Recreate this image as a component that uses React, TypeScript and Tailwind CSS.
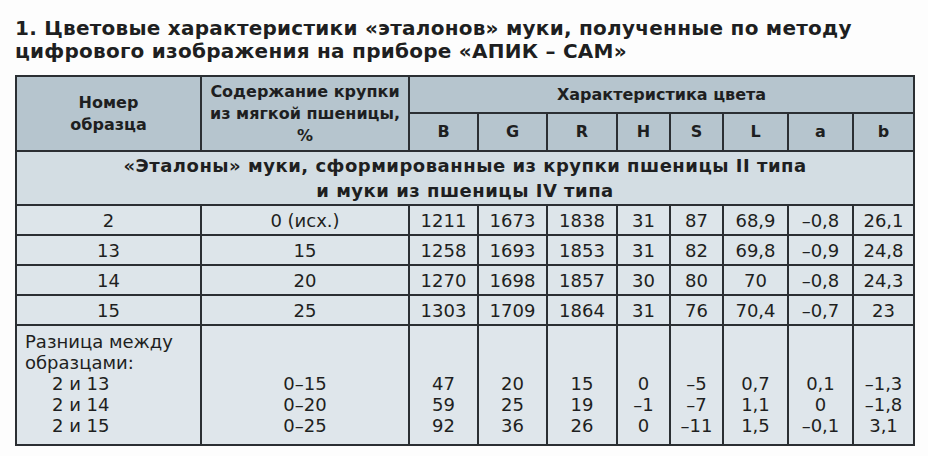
const cols = [185, 208, 69, 69, 70, 53, 53, 65, 65, 61];
const letters = ['B', 'G', 'R', 'H', 'S', 'L', 'a', 'b'];

const rows = [
  ['2', '0 (исх.)', '1211', '1673', '1838', '31', '87', '68,9', '–0,8', '26,1'],
  ['13', '15', '1258', '1693', '1853', '31', '82', '69,8', '–0,9', '24,8'],
  ['14', '20', '1270', '1698', '1857', '30', '80', '70', '–0,8', '24,3'],
  ['15', '25', '1303', '1709', '1864', '31', '76', '70,4', '–0,7', '23'],
];

const diffs = [
  ['2 и 13', '0–15', '47', '20', '15', '0', '–5', '0,7', '0,1', '–1,3'],
  ['2 и 14', '0–20', '59', '25', '19', '–1', '–7', '1,1', '0', '–1,8'],
  ['2 и 15', '0–25', '92', '36', '26', '0', '–11', '1,5', '–0,1', '3,1'],
];

const cell = 'border-2 border-[#2b2f33] text-center align-middle p-0';

export default function App() {
  return (
    <div className="w-[928px] h-[456px] bg-[#fdfdfd] overflow-hidden font-['DejaVu_Sans',sans-serif] text-[#1e1f21]">
      {/* Title */}
      <div className="pt-[17px] pl-[15px] text-[20px] leading-[23px] font-bold tracking-[0.25px]">
        <div>1. Цветовые характеристики «эталонов» муки, полученные по методу</div>
        <div>цифрового изображения на приборе «АПИК – САМ»</div>
      </div>

      <table className="ml-[15px] mt-[12px] w-[898px] table-fixed border-collapse">
        <colgroup>
          {cols.map((w, i) => (
            <col key={i} style={{ width: w }} />
          ))}
        </colgroup>
        <thead>
          <tr className="h-[37px] bg-[#b6c5ce]">
            <th rowSpan={2} className={`${cell} text-[16px] leading-[22px] font-bold`}>
              Номер
              <br />
              образца
            </th>
            <th rowSpan={2} className={`${cell} text-[16px] leading-[22px] font-bold`}>
              Содержание крупки
              <br />
              из мягкой пшеницы,
              <br />%
            </th>
            <th colSpan={8} className={`${cell} text-[16px] font-bold`}>
              Характеристика цвета
            </th>
          </tr>
          <tr className="h-[38px] bg-[#b6c5ce]">
            {letters.map((l) => (
              <th key={l} className={`${cell} text-[16px] font-bold`}>
                {l}
              </th>
            ))}
          </tr>
        </thead>
        <tbody>
          <tr className="h-[54px] bg-[#d3dde3]">
            <td colSpan={10} className={`${cell} text-[18px] leading-[25px] font-bold tracking-[0.5px]`}>
              «Эталоны» муки, сформированные из крупки пшеницы II типа
              <br />и муки из пшеницы IV типа
            </td>
          </tr>
          {rows.map((r, i) => (
            <tr key={i} className="h-[30px] bg-[#dde5ea]">
              {r.map((v, j) => (
                <td key={j} className={`${cell} text-[18px]`}>
                  {v}
                </td>
              ))}
            </tr>
          ))}
          <tr className="h-[120px] bg-[#dfe6eb]">
            <td className={`${cell} text-left align-top pt-[5px] text-[18px] leading-[21px]`}>
              <div className="pl-[8px]">Разница между</div>
              <div className="pl-[8px]">образцами:</div>
              {diffs.map((d) => (
                <div key={d[0]} className="pl-[35px]">
                  {d[0]}
                </div>
              ))}
            </td>
            {cols.slice(1).map((_, j) => (
              <td key={j} className={`${cell} align-top pt-[47px] text-[18px] leading-[21px]`}>
                {diffs.map((d, k) => (
                  <div key={k}>{d[j + 1]}</div>
                ))}
              </td>
            ))}
          </tr>
        </tbody>
      </table>
    </div>
  );
}
